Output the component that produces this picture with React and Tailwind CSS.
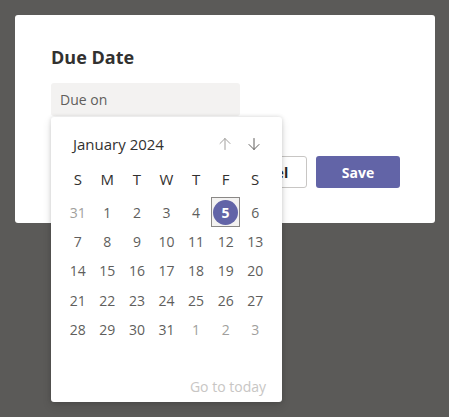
import React from "react";

const weekdays = ["S", "M", "T", "W", "T", "F", "S"];

const days = [
  { d: 31, out: true }, { d: 1 }, { d: 2 }, { d: 3 }, { d: 4 }, { d: 5, sel: true }, { d: 6 },
  { d: 7 }, { d: 8 }, { d: 9 }, { d: 10 }, { d: 11 }, { d: 12 }, { d: 13 },
  { d: 14 }, { d: 15 }, { d: 16 }, { d: 17 }, { d: 18 }, { d: 19 }, { d: 20 },
  { d: 21 }, { d: 22 }, { d: 23 }, { d: 24 }, { d: 25 }, { d: 26 }, { d: 27 },
  { d: 28 }, { d: 29 }, { d: 30 }, { d: 31 }, { d: 1, out: true }, { d: 2, out: true }, { d: 3, out: true },
];

const Arrow = ({ down, color }) => (
  <svg width="14" height="14" viewBox="0 0 14 14" fill="none" stroke={color} strokeWidth="1" strokeLinecap="round" strokeLinejoin="round">
    {down ? (
      <>
        <path d="M7 1.5v11" />
        <path d="M2 7.5l5 5 5-5" />
      </>
    ) : (
      <>
        <path d="M7 12.5v-11" />
        <path d="M2 6.5l5-5 5 5" />
      </>
    )}
  </svg>
);

const Calendar = () => {
  return (
    <div className="absolute left-[36px] top-[102px] w-[231px] h-[285px] bg-white rounded-[3px] shadow-[0_0_4px_rgba(0,0,0,0.14),0_4px_10px_rgba(0,0,0,0.12)] flex flex-col pt-[11px] px-[12px] pb-[5px]">
      <div className="h-[32px] flex items-center">
        <span className="pl-[10px] text-[15px] text-[#323130] flex-1">January 2024</span>
        <div className="flex mr-[1px]">
          <span className="w-[29.4px] flex justify-center">
            <Arrow color="#a19f9d" />
          </span>
          <span className="w-[29.4px] flex justify-center">
            <Arrow down color="#605e5c" />
          </span>
        </div>
      </div>
      <div className="grid grid-cols-7 mt-[5px] mb-[3px]">
        {weekdays.map((w, i) => (
          <div key={i} className="h-[29.4px] flex items-center justify-center text-[15px] text-[#323130]">
            {w}
          </div>
        ))}
      </div>
      <div className="grid grid-cols-7">
        {days.map((x, i) => (
          <div key={i} className="h-[29.4px] flex items-center justify-center">
            {x.sel ? (
              <div className="w-[30px] h-[30px] border border-[#8a8886] bg-[#f3f2f1] flex items-center justify-center">
                <div className="w-[25px] h-[25px] rounded-full bg-[#6264a7] text-white font-bold text-[14px] flex items-center justify-center">
                  {x.d}
                </div>
              </div>
            ) : (
              <span className={`text-[14px] ${x.out ? "text-[#a19f9d]" : "text-[#605e5c]"}`}>{x.d}</span>
            )}
          </div>
        ))}
      </div>
      <div className="mt-auto flex justify-end pr-[4px]">
        <span className="text-[14px] text-[#c8c6c4] leading-[20px]">Go to today</span>
      </div>
    </div>
  );
};

export default function App() {
  return (
    <div className="w-[449px] h-[417px] bg-[#5b5a58] pt-[15px] pl-[15px]" style={{ fontFamily: '"Open Sans", "Noto Sans", sans-serif' }}>
      <div className="relative w-[420px] h-[208px] bg-white rounded-[3px] pt-[30px] pl-[36px] pr-[35px]">
        <h2 className="text-[18px] leading-[24px] font-bold text-[#323130]">Due Date</h2>
        <div className="mt-[14px] w-[189px] h-[33px] bg-[#f3f2f1] rounded-[3px] flex items-center pl-[9px] text-[14px] text-[#605e5c]">
          Due on
        </div>
        <div className="mt-[40px] flex justify-end gap-[9px]">
          <button className="w-[84px] h-[32px] border border-[#c8c6c4] rounded-[3px] bg-white text-[14px] font-bold text-[#252423]">
            Cancel
          </button>
          <button className="w-[84px] h-[32px] rounded-[3px] bg-[#6264a7] text-[14px] font-bold text-white">
            Save
          </button>
        </div>
        <Calendar />
      </div>
    </div>
  );
}
